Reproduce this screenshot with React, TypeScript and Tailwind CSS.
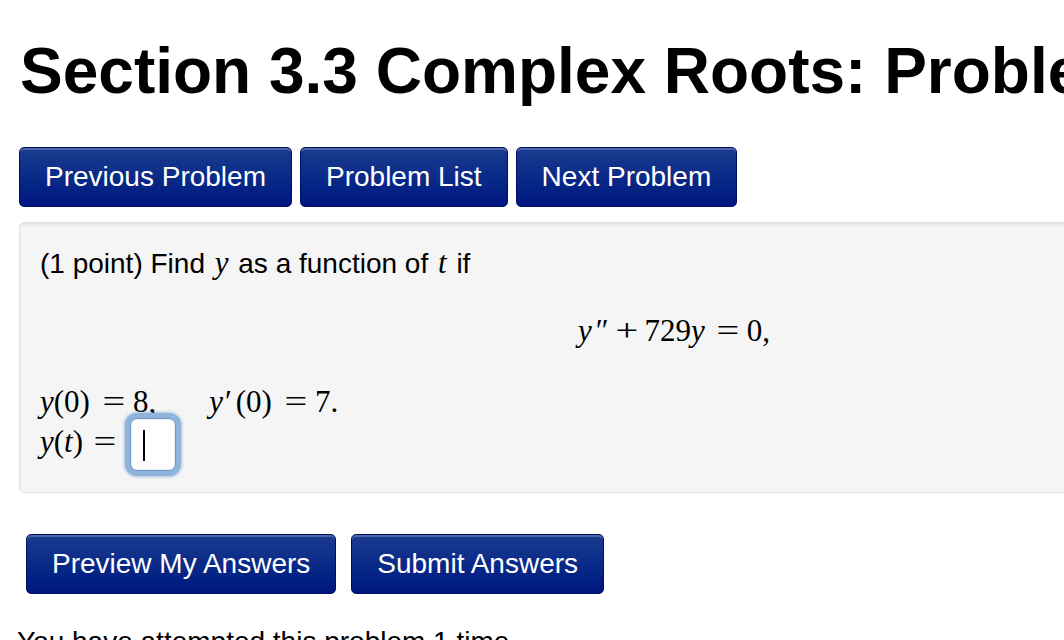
import React from "react";

const serif = "font-['Liberation_Serif','Times_New_Roman',serif]";

function Btn({ children }: { children: React.ReactNode }) {
  return (
    <button className="h-[60px] px-[25px] text-[28px] leading-[32px] text-white rounded-[5px] border border-[#001060] bg-linear-to-b from-[#1b3b8f] to-[#001580] shadow-[inset_0_2px_0_rgba(255,255,255,0.22)] whitespace-nowrap">
      {children}
    </button>
  );
}

function Wide({ children }: { children: React.ReactNode }) {
  return <span className="inline-block scale-x-[1.3]">{children}</span>;
}

export default function App() {
  return (
    <div className="w-[1064px] h-[640px] overflow-hidden bg-white text-black font-['Liberation_Sans',Arial,sans-serif]">
      <div className="w-[1360px] pl-[19px]">
        <h1 className="mt-[36px] ml-[1px] text-[64px] leading-[70px] font-bold whitespace-nowrap">
          Section 3.3 Complex Roots: Problem 6
        </h1>

        <div className="mt-[41px] flex gap-[8px]">
          <Btn>Previous Problem</Btn>
          <Btn>Problem List</Btn>
          <Btn>Next Problem</Btn>
        </div>

        <div className="mt-[15px] w-[1312px] h-[271px] rounded-[5px] border border-[#e3e3e3] bg-[#f5f5f5] shadow-[inset_0_2px_3px_rgba(0,0,0,0.07)] px-[20px] pt-[19px]">
          <p className="text-[28px] leading-[42px] whitespace-nowrap">
            (1 point) Find <span className={`${serif} italic text-[31px] mx-[2px]`}>y</span> as a function of{" "}
            <span className={`${serif} italic text-[31px] mx-[2px]`}>t</span> if
          </p>

          <div className={`${serif} mt-[26px] text-[31px] leading-[40px] whitespace-nowrap flex justify-center pr-[2px]`}>
            <span className="italic">y</span>
            <span className="ml-[4px]">″</span>
            <span className="inline-block w-[36px] text-center">
              <Wide>+</Wide>
            </span>
            <span>729</span>
            <span className="italic mr-[4px]">y</span>
            <span className="inline-block w-[38px] text-center">
              <Wide>=</Wide>
            </span>
            <span>0,</span>
          </div>

          <div className={`${serif} mt-[38px] text-[31px] leading-[26px] whitespace-nowrap flex`}>
            <span>
              <span className="italic">y</span>(0)
            </span>
            <span className="inline-block w-[43px] text-center pl-[5px]">
              <Wide>=</Wide>
            </span>
            <span>8,</span>
            <span className="ml-[53px]">
              <span className="italic">y</span>
              <span className="ml-[2px]">′</span>
              <span className="ml-[4px]">(0)</span>
            </span>
            <span className="inline-block w-[43px] text-center pl-[4px]">
              <Wide>=</Wide>
            </span>
            <span>7.</span>
          </div>

          <div className="-mt-[2px] flex items-start">
            <span className={`${serif} mt-[9px] text-[31px] leading-[40px] whitespace-nowrap flex`}>
              <span>
                <span className="italic">y</span>(<span className="italic">t</span>)
              </span>
              <span className="inline-block w-[40px] text-center pl-[4px]">
                <Wide>=</Wide>
              </span>
            </span>
            <div className="ml-[2px] w-[56px] h-[63px] rounded-[12px] bg-[#8fb3db] p-[5px] shadow-[0_0_3px_1px_rgba(120,160,210,0.6)]">
              <div className="w-full h-full rounded-[7px] bg-white border border-[#6f98c6] shadow-[inset_0_0_2px_rgba(90,130,190,0.4)] pl-[12px] pt-[11px]">
                <div className="w-[2px] h-[31px] bg-black" />
              </div>
            </div>
          </div>
        </div>

        <div className="mt-[41px] ml-[7px] flex gap-[15px]">
          <Btn>Preview My Answers</Btn>
          <Btn>Submit Answers</Btn>
        </div>

        <p className="mt-[28px] -ml-[2px] text-[28px] leading-[40px] whitespace-nowrap">
          You have attempted this problem 1 time.
        </p>
      </div>
    </div>
  );
}
